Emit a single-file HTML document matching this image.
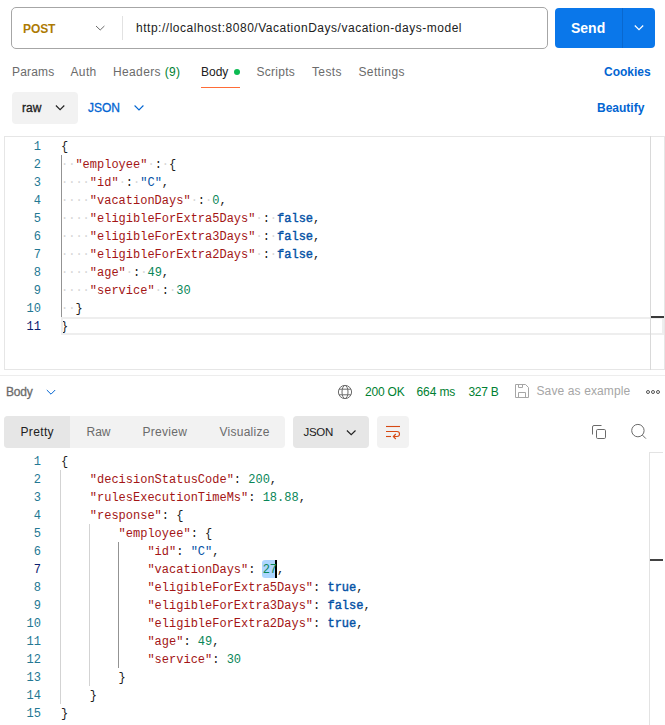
<!DOCTYPE html>
<html lang="en">
<head>
<meta charset="utf-8">
<title>Postman request</title>
<style>
html,body{margin:0;padding:0;background:#fff;}
body{width:665px;height:725px;position:relative;overflow:hidden;font-family:"Liberation Sans",Arial,sans-serif;font-size:12px;color:#6b6b6b;}
.a{position:absolute;white-space:nowrap;line-height:16px;}
.t{color:#6b6b6b;}
.dark{color:#212121;}
.blue{color:#0265d2;}
.green{color:#007f31;}
.b{font-weight:bold;}
.m{-webkit-text-stroke:0.3px currentColor;}
svg{position:absolute;overflow:visible;}
/* url bar */
#urlbox{position:absolute;left:11px;top:7px;width:535px;height:40px;border:1px solid #a6a6a6;border-radius:5px;box-sizing:content-box;}
#urldiv{position:absolute;left:122px;top:16px;width:1px;height:24px;background:#e2e2e2;}
#send{position:absolute;left:555px;top:8px;width:100px;height:40px;background:#0a77ea;border-radius:4px;}
#senddiv{position:absolute;left:622px;top:8px;width:1px;height:40px;background:#0968cf;}
/* code */
.code{position:absolute;font-family:"Liberation Mono","DejaVu Sans Mono",monospace;font-size:12px;line-height:18px;white-space:pre;color:#212121;}
.code div{height:18px;}
.ln{position:absolute;font-family:"Liberation Mono","DejaVu Sans Mono",monospace;font-size:12px;line-height:18px;text-align:right;width:30px;color:#237893;}
.ln div{height:18px;}
.k{color:#a31515;}
.n{color:#098658;}
.bo{color:#0451a5;-webkit-text-stroke:0.4px #0451a5;}
.ws{color:#d6d6d6;}
</style>
</head>
<body>
<!-- URL bar -->
<div id="urlbox"></div>
<div class="a b" style="left:23px;top:21px;font-size:12px;color:#ad7a03;letter-spacing:-0.1px;">POST</div>
<svg style="left:95px;top:24px" width="10" height="8" viewBox="0 0 10 8"><path d="M1 2 L5.2 6 L9.4 2" fill="none" stroke="#6b6b6b" stroke-width="1"/></svg>
<div id="urldiv"></div>
<div class="a dark" style="left:136px;top:20px;letter-spacing:0.52px;">http://localhost:8080/VacationDays/vacation-days-model</div>
<div id="send"></div>
<div id="senddiv"></div>
<div class="a b" style="left:571px;top:20px;font-size:14px;color:#fff;">Send</div>
<svg style="left:634px;top:24.3px" width="10" height="8" viewBox="0 0 10 8"><path d="M0.8 1.5 L5 5.7 L9.2 1.5" fill="none" stroke="#fff" stroke-width="1.2"/></svg>

<!-- request tabs -->
<div class="a t" style="left:12px;top:64px;letter-spacing:0.17px;">Params</div>
<div class="a t" style="left:70.5px;top:64px;letter-spacing:0.35px;">Auth</div>
<div class="a t" style="left:113px;top:64px;letter-spacing:0.37px;">Headers <span class="green">(9)</span></div>
<div class="a dark" style="left:201px;top:64px;">Body</div>
<div style="position:absolute;left:234px;top:69px;width:6px;height:6px;border-radius:3px;background:#0cbb52;"></div>
<div style="position:absolute;left:201px;top:87px;width:39px;height:1px;background:#ff6c37;"></div>
<div class="a t" style="left:256.5px;top:64px;letter-spacing:0.27px;">Scripts</div>
<div class="a t" style="left:312px;top:64px;letter-spacing:0.36px;">Tests</div>
<div class="a t" style="left:358.5px;top:64px;letter-spacing:0.37px;">Settings</div>
<div class="a blue b" style="left:604px;top:64px;">Cookies</div>

<!-- body type row -->
<div style="position:absolute;left:12px;top:92px;width:66px;height:32px;background:#f2f2f2;border-radius:4px;"></div>
<div class="a dark m" style="left:22px;top:100px;">raw</div>
<svg style="left:55px;top:104.4px" width="10" height="8" viewBox="0 0 10 8"><path d="M0.9 1.5 L5.1 5.7 L9.3 1.5" fill="none" stroke="#212121" stroke-width="1.15"/></svg>
<div class="a blue m" style="left:88px;top:100px;">JSON</div>
<svg style="left:134px;top:104.4px" width="10" height="8" viewBox="0 0 10 8"><path d="M0.6 1.5 L5 5.9 L9.4 1.5" fill="none" stroke="#0265d2" stroke-width="1.1"/></svg>
<div class="a blue b" style="left:597px;top:100px;">Beautify</div>

<!-- request editor -->
<div style="position:absolute;left:4px;top:136px;width:661px;height:234px;border:1px solid #e6e6e6;box-sizing:border-box;"></div>
<div class="ln" style="left:11px;top:138px;"><div>1</div><div>2</div><div>3</div><div>4</div><div>5</div><div>6</div><div>7</div><div>8</div><div>9</div><div>10</div><div style="color:#0b216f">11</div></div>
<div class="code" style="left:61px;top:138px;"><div>{</div><div><span class="ws">··</span><span class="k">"employee"</span><span class="ws">·</span>:<span class="ws">·</span>{</div><div><span class="ws">····</span><span class="k">"id"</span><span class="ws">·</span>:<span class="ws">·</span><span style="color:#0451a5">"C"</span>,</div><div><span class="ws">····</span><span class="k">"vacationDays"</span><span class="ws">·</span>:<span class="ws">·</span><span class="n">0</span>,</div><div><span class="ws">····</span><span class="k">"eligibleForExtra5Days"</span><span class="ws">·</span>:<span class="ws">·</span><span class="bo">false</span>,</div><div><span class="ws">····</span><span class="k">"eligibleForExtra3Days"</span><span class="ws">·</span>:<span class="ws">·</span><span class="bo">false</span>,</div><div><span class="ws">····</span><span class="k">"eligibleForExtra2Days"</span><span class="ws">·</span>:<span class="ws">·</span><span class="bo">false</span>,</div><div><span class="ws">····</span><span class="k">"age"</span><span class="ws">·</span>:<span class="ws">·</span><span class="n">49</span>,</div><div><span class="ws">····</span><span class="k">"service"</span><span class="ws">·</span>:<span class="ws">·</span><span class="n">30</span></div><div><span class="ws">··</span>}</div><div>}</div></div>

<div style="position:absolute;left:0;top:375px;width:665px;height:1px;background:#ededed;"></div>
<div style="position:absolute;left:61px;top:317px;width:603px;height:18px;border:2px solid #eeeeee;box-sizing:border-box;"></div>
<div style="position:absolute;left:61px;top:155px;width:1px;height:162px;background:#939393;"></div>
<div style="position:absolute;left:650px;top:136px;width:1px;height:234px;background:#d9d9d9;"></div>
<div style="position:absolute;left:651px;top:316px;width:13px;height:2px;background:#3a3a3a;"></div>
<!-- response header -->
<div class="a t m" style="left:6px;top:384px;letter-spacing:-0.2px;">Body</div>
<svg style="left:46px;top:388px" width="10" height="8" viewBox="0 0 10 8"><path d="M0.8 2 L5 6.2 L9.2 2" fill="none" stroke="#0265d2" stroke-width="1"/></svg>
<div class="a green" style="left:365px;top:384px;letter-spacing:-0.2px;">200 OK</div>
<div class="a green" style="left:416.5px;top:384px;letter-spacing:-0.1px;">664 ms</div>
<div class="a green" style="left:468.5px;top:384px;letter-spacing:-0.3px;">327 B</div>
<div class="a" style="left:536.5px;top:383px;color:#a6a6a6;letter-spacing:0.12px;">Save as example</div>


<!-- globe -->
<svg style="left:337px;top:384px" width="16" height="16" viewBox="0 0 16 16" fill="none" stroke="#6b6b6b" stroke-width="1"><circle cx="8" cy="8" r="6.6"/><ellipse cx="8" cy="8" rx="3" ry="6.6"/><path d="M2 5.2 H14 M2 10.8 H14"/></svg>
<!-- save -->
<svg style="left:515px;top:384px" width="14" height="14" viewBox="0 0 14 14" fill="none" stroke="#a6a6a6" stroke-width="1"><path d="M0.5 0.5 H10.5 L13.5 3.5 V13.5 H0.5 Z"/><path d="M3.5 0.5 V3.5 H7.5 V0.5"/><path d="M3.5 13.5 V8.5 H10.5 V13.5"/></svg>
<!-- more -->
<svg style="left:645px;top:389px" width="16" height="6" viewBox="0 0 16 6" fill="none" stroke="#555" stroke-width="1"><circle cx="3" cy="3" r="1.5"/><circle cx="8" cy="3" r="1.5"/><circle cx="13" cy="3" r="1.5"/></svg>

<!-- response view tabs -->
<div style="position:absolute;left:4px;top:416px;width:281px;height:32px;background:#f2f2f2;border-radius:4px;"></div>
<div style="position:absolute;left:4px;top:416px;width:66px;height:32px;background:#e6e6e6;border-radius:4px 0 0 4px;"></div>
<div class="a dark" style="left:20.5px;top:424px;letter-spacing:0.35px;">Pretty</div>
<div class="a t" style="left:86.5px;top:424px;">Raw</div>
<div class="a t" style="left:142.5px;top:424px;letter-spacing:0.28px;">Preview</div>
<div class="a t" style="left:219.5px;top:424px;letter-spacing:0.25px;">Visualize</div>
<div style="position:absolute;left:293px;top:416px;width:76px;height:32px;background:#e6e6e6;border-radius:4px;"></div>
<div class="a dark" style="left:303.5px;top:424px;font-size:11.5px;letter-spacing:-0.3px;">JSON</div>
<svg style="left:346px;top:428.6px" width="10" height="8" viewBox="0 0 10 8"><path d="M0.9 1.5 L5.2 5.7 L9.5 1.5" fill="none" stroke="#212121" stroke-width="1.15"/></svg>
<div style="position:absolute;left:377px;top:416px;width:32px;height:32px;background:#f2f2f2;border-radius:4px;"></div>


<!-- wrap icon -->
<svg style="left:385px;top:424px" width="16" height="16" viewBox="0 0 16 16" fill="none" stroke="#d64a14" stroke-width="1.1"><path d="M1 2.5 H15"/><path d="M1 7.5 H12 A2.5 2.5 0 0 1 12 12.5 H8.5"/><path d="M10.8 10 L8.3 12.5 L10.8 15"/><path d="M1 12.5 H6"/></svg>
<!-- copy icon -->
<svg style="left:592px;top:425px" width="14" height="14" viewBox="0 0 14 14" fill="none" stroke="#6b6b6b" stroke-width="1"><path d="M0.5 9.5 V2 A1.5 1.5 0 0 1 2 0.5 H9.5"/><rect x="4.5" y="4.5" width="9" height="9" rx="1.2"/></svg>
<!-- search icon -->
<svg style="left:630px;top:423px" width="17" height="17" viewBox="0 0 17 17" fill="none" stroke="#6b6b6b" stroke-width="1"><circle cx="7.9" cy="7.6" r="6.2"/><path d="M12.4 12.1 L15.9 15.6"/></svg>

<!-- response editor -->
<div style="position:absolute;left:60px;top:470px;width:1px;height:234px;background:#d3d3d3;"></div>
<div style="position:absolute;left:89px;top:524px;width:1px;height:162px;background:#d3d3d3;"></div>
<div style="position:absolute;left:118px;top:542px;width:1px;height:126px;background:#939393;"></div>
<div style="position:absolute;left:649px;top:452px;width:14px;height:280px;border:1px solid #e3e3e3;border-right:none;box-sizing:border-box;"></div>
<div style="position:absolute;left:650px;top:559px;width:13px;height:2px;background:#424242;"></div>
<div style="position:absolute;left:262px;top:560px;width:14px;height:18px;background:#add6ff;border-radius:3px 0 0 3px;"></div>
<div style="position:absolute;left:275px;top:560px;width:2px;height:18px;background:#000;"></div>
<div class="ln" style="left:11px;top:453px;"><div>1</div><div>2</div><div>3</div><div>4</div><div>5</div><div>6</div><div style="color:#0b216f">7</div><div>8</div><div>9</div><div>10</div><div>11</div><div>12</div><div>13</div><div>14</div><div>15</div></div>
<div class="code" style="left:61px;top:453px;"><div>{</div><div>    <span class="k">"decisionStatusCode"</span>: <span class="n">200</span>,</div><div>    <span class="k">"rulesExecutionTimeMs"</span>: <span class="n">18.88</span>,</div><div>    <span class="k">"response"</span>: {</div><div>        <span class="k">"employee"</span>: {</div><div>            <span class="k">"id"</span>: <span style="color:#0451a5">"C"</span>,</div><div>            <span class="k">"vacationDays"</span>: <span class="n">27</span>,</div><div>            <span class="k">"eligibleForExtra5Days"</span>: <span class="bo">true</span>,</div><div>            <span class="k">"eligibleForExtra3Days"</span>: <span class="bo">false</span>,</div><div>            <span class="k">"eligibleForExtra2Days"</span>: <span class="bo">true</span>,</div><div>            <span class="k">"age"</span>: <span class="n">49</span>,</div><div>            <span class="k">"service"</span>: <span class="n">30</span></div><div>        }</div><div>    }</div><div>}</div></div>
</body>
</html>
